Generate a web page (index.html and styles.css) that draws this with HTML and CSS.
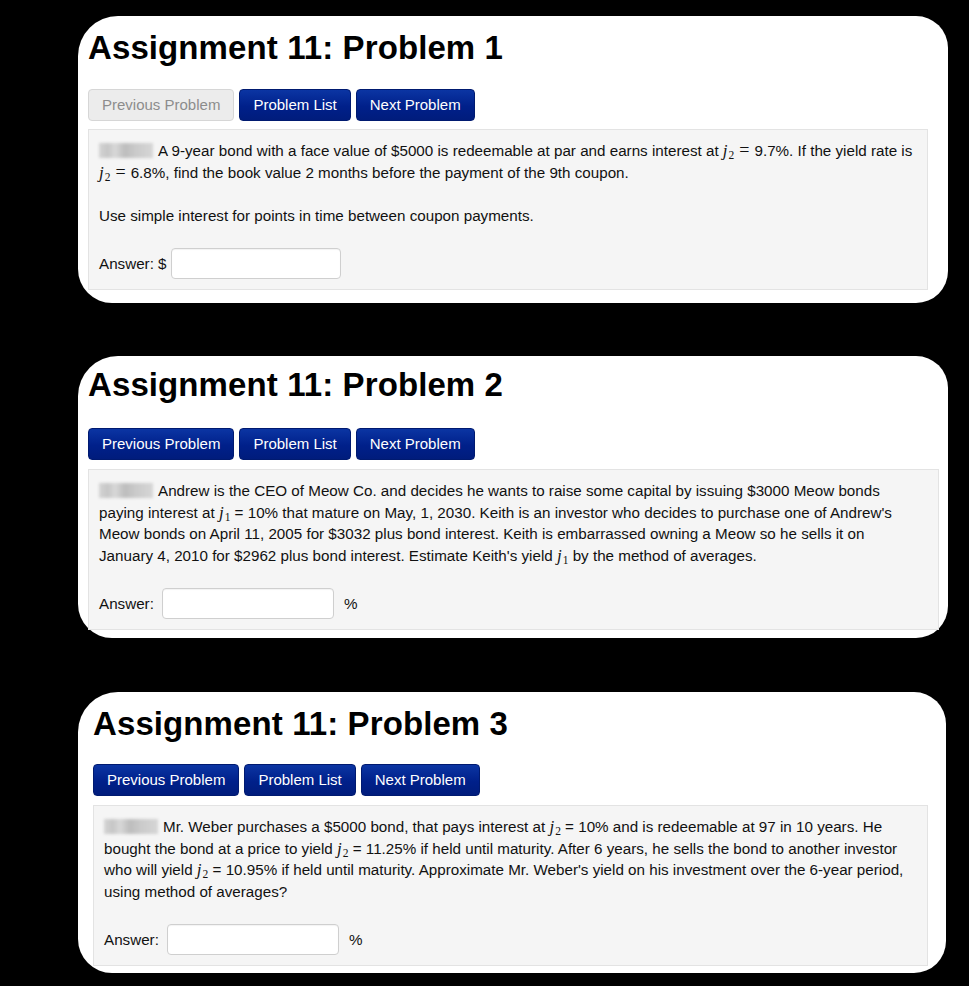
FILE: index.html
```html
<!DOCTYPE html>
<html lang="en">
<head>
<meta charset="utf-8">
<title>Assignment 11</title>
<link rel="stylesheet" href="styles.css">
</head>
<body>
<main class="stack">

  <section class="card card-one">
    <h1 class="title">Assignment 11: Problem 1</h1>
    <nav class="nav">
      <span class="btn btn-disabled">Previous Problem</span>
      <a class="btn" href="#">Problem List</a>
      <a class="btn" href="#">Next Problem</a>
    </nav>
    <div class="problem">
      <p class="para"><span class="redact"></span>A 9-year bond with a face value of $5000 is redeemable at par and earns interest at <span class="math"><i class="mi">j</i><span class="msub">2</span><span class="mo">=</span></span>9.7%. If the yield rate is<br><span class="math"><i class="mi">j</i><span class="msub">2</span><span class="mo">=</span></span>6.8%, find the book value 2 months before the payment of the 9th coupon.</p>
      <p class="para">Use simple interest for points in time between coupon payments.</p>
      <div class="answer">
        <label class="answer-label" for="a1">Answer: $</label>
        <input class="answer-input answer-input-tight" id="a1" type="text">
      </div>
    </div>
  </section>

  <section class="card card-two">
    <h1 class="title">Assignment 11: Problem 2</h1>
    <nav class="nav">
      <a class="btn" href="#">Previous Problem</a>
      <a class="btn" href="#">Problem List</a>
      <a class="btn" href="#">Next Problem</a>
    </nav>
    <div class="problem">
      <p class="para"><span class="redact"></span>Andrew is the CEO of Meow Co. and decides he wants to raise some capital by issuing $3000 Meow bonds<br>paying interest at <span class="math"><i class="mi">j</i><span class="msub">1</span></span> = 10% that mature on May, 1, 2030. Keith is an investor who decides to purchase one of Andrew's<br>Meow bonds on April 11, 2005 for $3032 plus bond interest. Keith is embarrassed owning a Meow so he sells it on<br>January 4, 2010 for $2962 plus bond interest. Estimate Keith's yield <span class="math"><i class="mi">j</i><span class="msub">1</span></span> by the method of averages.</p>
      <div class="answer">
        <label class="answer-label" for="a2">Answer:</label>
        <input class="answer-input" id="a2" type="text">
        <span class="unit">%</span>
      </div>
    </div>
  </section>

  <section class="card card-three">
    <h1 class="title">Assignment 11: Problem 3</h1>
    <nav class="nav">
      <a class="btn" href="#">Previous Problem</a>
      <a class="btn" href="#">Problem List</a>
      <a class="btn" href="#">Next Problem</a>
    </nav>
    <div class="problem">
      <p class="para"><span class="redact"></span>Mr. Weber purchases a $5000 bond, that pays interest at <span class="math"><i class="mi">j</i><span class="msub">2</span></span> = 10% and is redeemable at 97 in 10 years. He<br>bought the bond at a price to yield <span class="math"><i class="mi">j</i><span class="msub">2</span></span> = 11.25% if held until maturity. After 6 years, he sells the bond to another investor<br>who will yield <span class="math"><i class="mi">j</i><span class="msub">2</span></span> = 10.95% if held until maturity. Approximate Mr. Weber's yield on his investment over the 6-year period,<br>using method of averages?</p>
      <div class="answer">
        <label class="answer-label" for="a3">Answer:</label>
        <input class="answer-input" id="a3" type="text">
        <span class="unit">%</span>
      </div>
    </div>
  </section>

</main>
</body>
</html>
```

FILE: styles.css
```css
* {
  box-sizing: border-box;
}

body {
  margin: 0;
  background: #000;
  font-family: "Liberation Sans", Arial, Helvetica, sans-serif;
  color: #111;
}

.stack {
  display: flex;
  flex-direction: column;
  gap: 53px;
  padding: 16px 0 0 78px;
}

/* white problem card */
.card {
  background: #fff;
  width: 870px;
  border-radius: 40px 32px 32px 34px;
}

.card-one {
  padding: 13px 20px 13px 10px;
}

.card-two {
  padding: 10px 9px 8px 10px;
}

.card-three {
  width: 868px;
  margin-top: 1px;
  padding: 13px 18px 7px 15px;
}

.title {
  margin: 0;
  font-size: 33px;
  line-height: 38px;
  font-weight: 700;
  color: #000;
  letter-spacing: 0.1px;
}

/* navigation buttons */
.nav {
  display: flex;
  gap: 5px;
  margin-top: 22px;
}

.card-two .nav {
  margin-top: 24px;
}

.card-three .nav {
  margin-top: 21px;
}

.btn {
  display: inline-block;
  padding: 5px 13px;
  font-size: 15px;
  line-height: 20px;
  color: #fff;
  text-decoration: none;
  background: linear-gradient(#0b35a3, #00208a 55%, #001c7c);
  border: 1px solid #001a70;
  border-radius: 4px;
}

.btn-disabled {
  color: #8c8c8c;
  background: #ececec;
  border-color: #d6d6d6;
}

/* problem body */
.problem {
  margin-top: 8px;
  padding: 10px;
  background: #f5f5f5;
  border: 1px solid #e3e3e3;
  font-size: 15.2px;
  line-height: 21.6px;
  color: #111;
}

.card-two .problem,
.card-three .problem {
  margin-top: 9px;
}

.para {
  margin: 0 0 21.6px;
}

/* blurred-out student name */
.redact {
  display: inline-block;
  width: 54px;
  height: 15px;
  margin-right: 5px;
  vertical-align: -2px;
  line-height: 0;
  background: linear-gradient(90deg, #d4d4d4 0, #c6c6c6 16%, #d8d8d8 30%, #bdbdbd 48%, #cacaca 68%, #d6d6d6 100%);
  filter: blur(1.8px);
}

.math {
  white-space: nowrap;
}

/* math glyphs are kept out of the line box height */
.mi,
.msub,
.mo {
  line-height: 0;
  font-family: "Liberation Serif", "DejaVu Serif", serif;
}

.mi {
  font-size: 17px;
  font-style: italic;
}

.msub {
  font-size: 11.5px;
  position: relative;
  top: 3px;
  margin-left: 1px;
}

.mo {
  font-size: 18px;
  margin: 0 5px;
}

/* answer row */
.answer {
  display: flex;
  align-items: center;
  height: 31px;
}

.answer-input {
  width: 172px;
  height: 31px;
  margin-left: 8.5px;
  padding: 4px 6px;
  background: #fff;
  border: 1px solid #cfcfcf;
  border-radius: 4px;
  box-shadow: inset 0 1px 1px rgba(0, 0, 0, 0.05);
  font: inherit;
}

.answer-input-tight {
  margin-left: 4px;
  width: 170px;
}

.unit {
  margin-left: 9.5px;
}
```
